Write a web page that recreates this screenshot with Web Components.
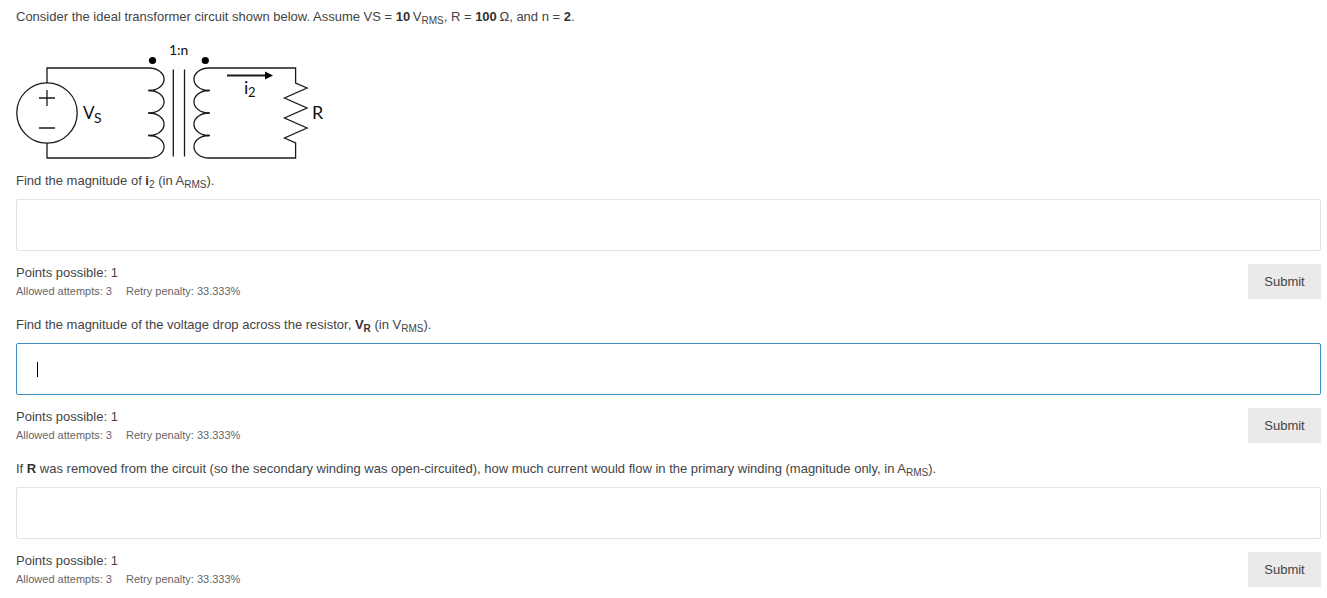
<!DOCTYPE html>
<html lang="en">
<head>
<meta charset="utf-8">
<title>Ideal transformer circuit</title>
<style>
body { margin: 0; background: #fff; color: #444; font: 13px/20px "Liberation Sans", Arial, sans-serif; }
sub { font-size: 10px; line-height: 0; vertical-align: -3px; }
b { color: #333; }
</style>
</head>
<body>
<problem-set>
  <span slot="intro">Consider the ideal transformer circuit shown below. Assume VS = <b>10</b>&#8201;V<sub>RMS</sub>, R = <b>100</b>&#8201;Ω, and n = <b>2</b>.</span>
  <circuit-diagram slot="figure"></circuit-diagram>
  <answer-question>Find the magnitude of <b>i</b><sub>2</sub> (in A<sub>RMS</sub>).</answer-question>
  <answer-question active>Find the magnitude of the voltage drop across the resistor, <b>V<sub>R</sub></b> (in V<sub>RMS</sub>).</answer-question>
  <answer-question>If <b>R</b> was removed from the circuit (so the secondary winding was open-circuited), how much current would flow in the primary winding (magnitude only, in A<sub>RMS</sub>).</answer-question>
</problem-set>

<template id="problem-set">
  <style>
    :host { display: block; padding: 7px 6px 0 16px; }
    p { margin: 0 0 9px; }
    .questions { display: flex; flex-direction: column; gap: 15px; margin-top: 8px; }
  </style>
  <p><slot name="intro"></slot></p>
  <slot name="figure"></slot>
  <div class="questions"><slot></slot></div>
</template>

<template id="circuit-diagram">
  <style>
    :host { display: block; }
    svg { display: block; }
    text { font-family: Lato, "Open Sans", sans-serif; fill: #111; }
    .wire { fill: none; stroke: #1a1a1a; stroke-width: 1.3; }
  </style>
  <svg width="312" height="127" viewBox="16 36 312 127" role="img" aria-label="Voltage source, ideal transformer and resistor">
    <g class="wire">
      <circle cx="47" cy="113" r="30.2"/>
      <path d="M47 83V68H149a15 11.2 0 0 1 0 22.5a15 11.2 0 0 1 0 22.5a15 11.2 0 0 1 0 22.5a15 11.2 0 0 1 0 22.5H47V143"/>
      <path d="M148 90.5h4M148 113h4M148 135.5h4M206 90.5h4M206 113h4M206 135.5h4"/>
      <path d="M39 98H55M47 90V106M39 128H55"/>
      <path d="M173.3 69.5V156.5M184.5 69.5V156.5"/>
      <path d="M209 90.5a15 11.2 0 0 1 0-22.5H295.6V83L307 88L284.5 98L307 108L284.5 118L307 128L284.5 138L295.6 143V158H209a15 11.2 0 0 1 0-22.5a15 11.2 0 0 1 0-22.5a15 11.2 0 0 1 0-22.5"/>
      <path d="M227 75.5H267" stroke-width="1.8"/>
    </g>
    <path d="M265 71.5L273 75.5L265 79.5Z"/>
    <circle cx="152.5" cy="60.5" r="3.6"/>
    <circle cx="205.3" cy="60.5" r="3.6"/>
    <text x="169" y="55" font-size="14">1:n</text>
    <text x="83" y="119" font-size="17">V</text>
    <text x="94" y="123" font-size="14">S</text>
    <text x="244" y="94" font-size="18">i</text>
    <text x="248" y="97" font-size="13">2</text>
    <text x="312" y="119" font-size="18">R</text>
  </svg>
</template>

<template id="answer-question">
  <style>
    :host { display: block; }
    label { display: block; margin-bottom: 8px; }
    input { display: block; box-sizing: border-box; width: 100%; height: 52px; padding: 0 20px; border: 1px solid #e3e3e3; border-radius: 2px; background: #fff; color: #333; font: inherit; outline: none; }
    :host([active]) input { border-color: #3c8dc0; background: linear-gradient(#000, #000) 20px 50% / 1px 15px no-repeat #fff; }
    footer { display: flex; justify-content: space-between; align-items: flex-start; margin-top: 13px; }
    .points { line-height: 18px; }
    .limits { display: flex; gap: 14px; color: #666; font-size: 11px; line-height: 18px; }
    button { min-width: 73px; height: 35px; padding: 0 16px; border: 0; border-radius: 1px; background: #eaeaea; color: #444; font: inherit; }
  </style>
  <label for="answer"><slot></slot></label>
  <input id="answer" type="text" autocomplete="off">
  <footer>
    <div>
      <div class="points">Points possible: 1</div>
      <div class="limits"><span>Allowed attempts: 3</span><span>Retry penalty: 33.333%</span></div>
    </div>
    <button type="button">Submit</button>
  </footer>
</template>

<script>
class TemplateElement extends HTMLElement {
  constructor() {
    super();
    const template = document.getElementById(this.localName);
    this.attachShadow({ mode: "open" }).append(template.content.cloneNode(true));
  }
}
customElements.define("problem-set", class extends TemplateElement {});
customElements.define("circuit-diagram", class extends TemplateElement {});
customElements.define("answer-question", class extends TemplateElement {});
</script>
</body>
</html>
